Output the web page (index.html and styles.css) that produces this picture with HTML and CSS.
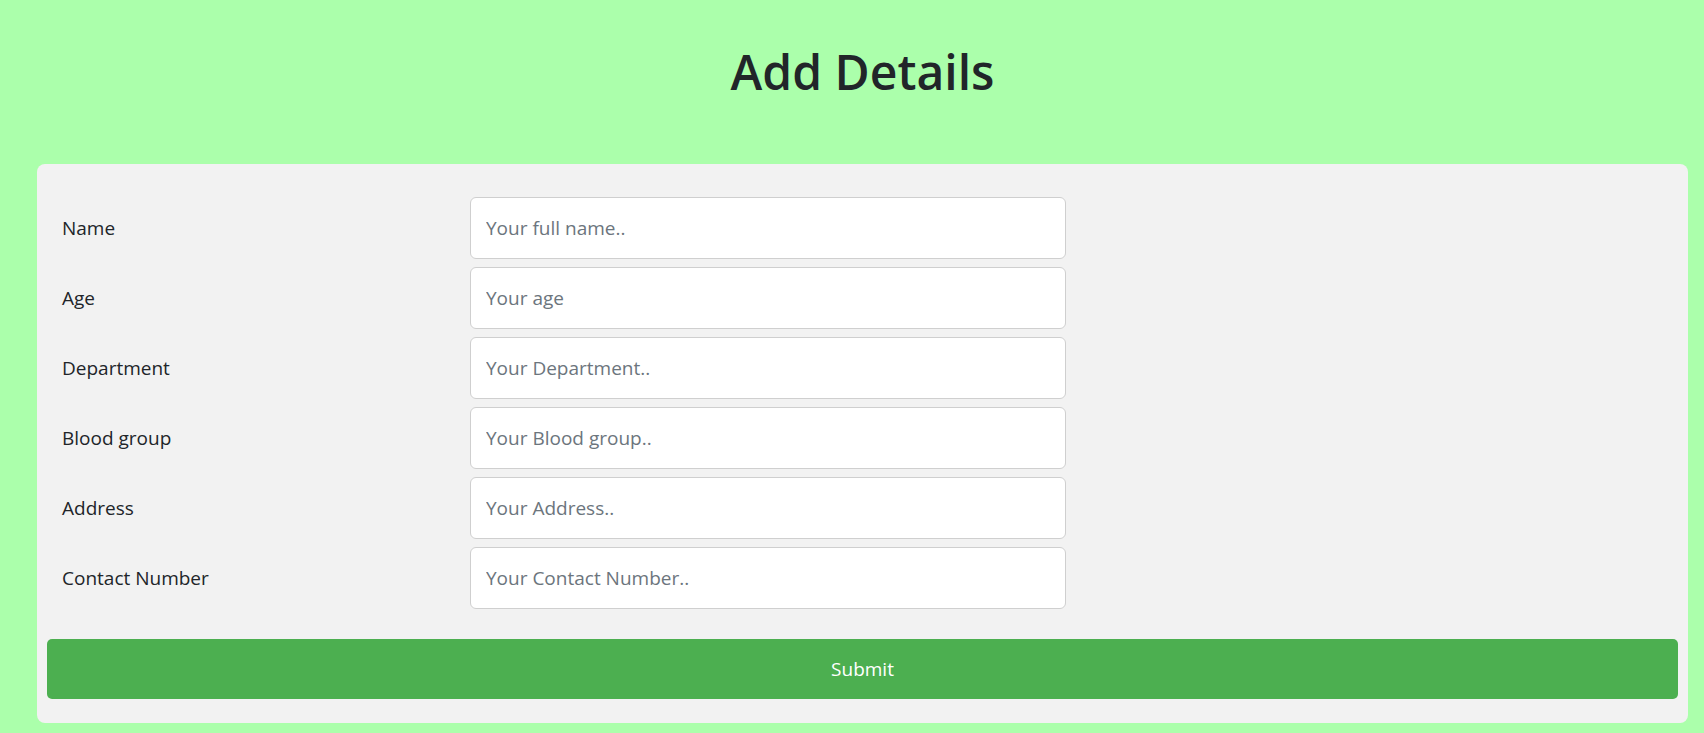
FILE: index.html
```html
<!DOCTYPE html>
<html lang="en">
<head>
<meta charset="utf-8">
<title>Add Details</title>
<link rel="stylesheet" href="styles.css">
</head>
<body>
<div class="page">
  <header class="header">
    <h1 class="title">Add Details</h1>
  </header>
  <form class="card">
    <div class="fields">
      <label class="label" for="name">Name</label>
      <input class="input" id="name" type="text" placeholder="Your full name..">
      <label class="label" for="age">Age</label>
      <input class="input" id="age" type="text" placeholder="Your age">
      <label class="label" for="dept">Department</label>
      <input class="input" id="dept" type="text" placeholder="Your Department..">
      <label class="label" for="blood">Blood group</label>
      <input class="input" id="blood" type="text" placeholder="Your Blood group..">
      <label class="label" for="addr">Address</label>
      <input class="input" id="addr" type="text" placeholder="Your Address..">
      <label class="label" for="phone">Contact Number</label>
      <input class="input" id="phone" type="text" placeholder="Your Contact Number..">
    </div>
    <button class="submit" type="button">Submit</button>
  </form>
</div>
</body>
</html>
```

FILE: styles.css
```css
html, body {
  margin: 0;
  padding: 0;
}
body {
  background: #abffab;
  font-family: "Open Sans", "Noto Sans", sans-serif;
  color: #212529;
}
.page {
  padding: 0 16px 0 37px;
}
.header {
  height: 164px;
  display: flex;
  justify-content: center;
}
.title {
  margin: 41px 0 0;
  font-size: 48px;
  line-height: 62px;
  font-weight: 600;
  color: #212529;
}
.card {
  display: block;
  background: #f2f2f2;
  border-radius: 8px;
  padding: 33px 10px 24px;
}
.fields {
  display: grid;
  grid-template-columns: 423px 596px;
  grid-auto-rows: 62px;
  row-gap: 8px;
  align-items: center;
}
.label {
  padding-left: 15px;
  font-size: 19px;
  color: #212529;
}
.input {
  box-sizing: border-box;
  height: 62px;
  width: 596px;
  border: 1px solid #cfcfcf;
  border-radius: 6px;
  background: #fff;
  padding: 0 15px;
  font-family: inherit;
  font-size: 19px;
  color: #212529;
  outline: none;
}
.input::placeholder {
  color: #6c757d;
}
.submit {
  display: block;
  width: 100%;
  height: 60px;
  margin-top: 30px;
  border: none;
  border-radius: 5px;
  background: #4caf50;
  color: #fff;
  font-family: inherit;
  font-size: 19px;
}
```
